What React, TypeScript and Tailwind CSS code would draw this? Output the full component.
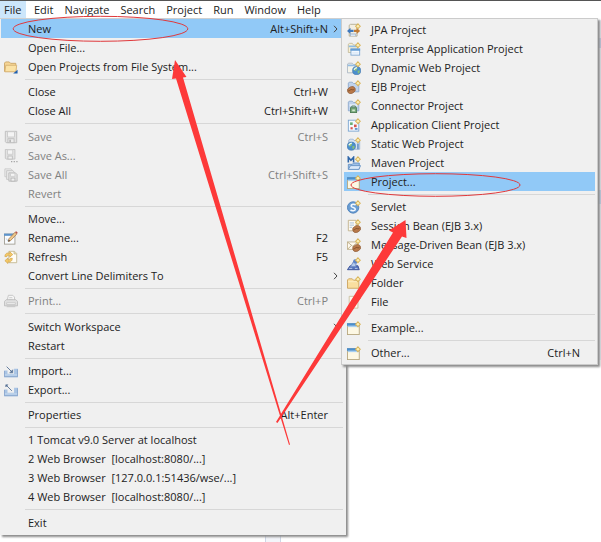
import type { ReactNode } from 'react'

type Entry = {
  label?: string
  keys?: string
  icon?: ReactNode
  disabled?: boolean
  active?: boolean
  arrow?: boolean
  sep?: 'narrow' | 'wide'
}

const Icon = ({ children }: { children: ReactNode }) => (
  <svg viewBox="0 0 16 16" className="size-3.5" aria-hidden="true">
    {children}
  </svg>
)

// small gold star used on every "new something" icon
const Spark = () => (
  <g>
    <path d="M12.500 0L14.200 2L16 3.700L14.200 5.400L12.500 7.400L10.800 5.400L9 3.700L10.800 2Z" fill="#d9b45a" />
    <circle cx="12.500" cy="3.700" r="1.500" fill="#fbeeb4" />
  </g>
)

const Bean = () => (
  <g>
    <ellipse cx="5" cy="11.500" rx="4.600" ry="3.700" transform="rotate(-25 5 11.500)" fill="#b9794a" stroke="#94603a" strokeWidth=".8" />
    <path d="M1.500 12.500c2-.2 2.500-2.200 4-1.600s2 .4 3-.8" fill="none" stroke="#7d4c28" />
  </g>
)

const Globe = ({ x, y }: { x: number; y: number }) => (
  <g transform={`translate(${x} ${y})`}>
    <circle cx="5" cy="5" r="4.700" fill="#4b8fce" stroke="#3a6ea5" strokeWidth=".6" />
    <path d="M1.500 3L4 1L6 2L5 4.500L3 5.500ZM6 5L8.500 4.500L8.500 7L6.500 8.500Z" fill="#8cc277" />
    <path d="M2 4Q3 1.800 5.500 1.500" stroke="#f0f8ff" strokeWidth="1.300" fill="none" />
  </g>
)

const FolderBack = () => (
  <path d="M1.500 13.500V3.500L2.500 2.500H6L7.500 4H13.500V13.500Z" fill="#c0d3ec" stroke="#8da9cd" />
)

const WindowIcon = () => (
  <Icon>
    <rect x=".5" y="3" width="13.500" height="12.500" fill="#fdf8e4" stroke="#b5a57c" />
    <rect x="0" y="2.500" width="14.500" height="3" fill="#4a8fce" />
    <rect x="1" y="5.500" width="12.500" height="1.500" fill="#a9d0f2" />
    <Spark />
  </Icon>
)

const OpenProjectsIcon = () => (
  <Icon>
    <path d="M.6 13V3.500L1.800 2.200H6L7.500 3.800H13.500V13Z" fill="#f6d595" stroke="#c9a364" />
    <path d="M1 13.500L2 6H14.500L13.500 13.500Z" fill="#fbe2a5" stroke="#d6b071" />
    <path d="M15.500 11V15.500H10.500Z" fill="#1f5fae" />
  </Icon>
)

const SaveIcon = () => (
  <Icon>
    <path d="M1.500 1.500H14.500V14.500H2.500L1.500 13.500Z" fill="#e3e3e3" stroke="#bdbdbd" />
    <rect x="4" y="2" width="8" height="6" fill="#f4f4f4" stroke="#cacaca" />
    <rect x="4.500" y="10" width="7" height="4.500" fill="#ececec" stroke="#bcbcbc" />
    <rect x="6" y="11" width="2" height="3" fill="#b9b9b9" />
  </Icon>
)

const SaveAsIcon = () => (
  <Icon>
    <path d="M1.500 .5H12.500V11.500H2.500L1.500 10.500Z" fill="#e3e3e3" stroke="#c2c2c2" />
    <rect x="4" y="1" width="6" height="5" fill="#f4f4f4" stroke="#cdcdcd" />
    <rect x="4.500" y="8" width="5" height="3.500" fill="#efefef" stroke="#bcbcbc" />
    <path d="M8 14.500h1.500M11 14.500h1.500M14 14.500h1.500" stroke="#a5a5a5" strokeWidth="1.500" />
  </Icon>
)

const SaveAllIcon = () => (
  <Icon>
    <path d="M1 1H8L10 3V10H1Z" fill="#ececec" stroke="#c8c8c8" />
    <path d="M3 3H10L12 5V13H3Z" fill="#eaeaea" stroke="#c5c5c5" />
    <path d="M5.500 5.500H13L15 7.500V15H5.500Z" fill="#e2e2e2" stroke="#bababa" />
    <rect x="7.500" y="6" width="5" height="3.500" fill="#f5f5f5" stroke="#cdcdcd" />
    <rect x="8" y="11.500" width="4.500" height="3.500" fill="#f0f0f0" stroke="#b5b5b5" />
  </Icon>
)

const RenameIcon = () => (
  <Icon>
    <rect x=".5" y="3.500" width="12" height="11.500" fill="#fafcff" stroke="#a09d92" />
    <rect x="0" y="3" width="13" height="2.500" fill="#5c93cb" />
    <path d="M2.500 8.500L4.500 11.500L9 9" fill="none" stroke="#b5cce4" />
    <path d="M12.500 1.500L14.500 3.500L7.500 11L5 12L5.500 9Z" fill="#f1c98a" stroke="#a67c50" strokeWidth=".9" />
    <path d="M12.500 1L14 .3L15.700 2L14.700 3.500Z" fill="#b8554a" />
    <path d="M5 12L5.500 10L7 11.500Z" fill="#333" />
  </Icon>
)

const RefreshIcon = () => (
  <Icon>
    <path d="M5.500 1.500H12L14.500 4V14.500H5.500Z" fill="#fffdf5" stroke="#c4b88f" />
    <path d="M11.500 1.500V4.500H14.500" fill="#ece0b8" stroke="#c4b88f" />
    <path d="M1 7.500C1 4 4 2.500 6.500 4V2L10 5.200L6.500 8.200V6.300C5 5.500 3.500 6 3.300 7.500Z" fill="#f5ca68" stroke="#cc9c42" strokeWidth=".7" />
    <path d="M9.500 9.500C9.500 13 6.500 14.500 4.500 13.500V15.500L1 12.200L4.500 9.200V11.200C5.800 11.800 7 11 7.200 9.500Z" fill="#f5ca68" stroke="#cc9c42" strokeWidth=".7" />
  </Icon>
)

const PrintIcon = () => (
  <Icon>
    <path d="M3.500 7.500L5 1.500H10L12 3.500V7.500Z" fill="#f6f6f6" stroke="#c2c2c2" />
    <path d="M6 4H9.500M5.500 6H10" stroke="#d0d0d0" />
    <path d="M.5 8.500L2.500 6.500H13.500L15.500 8.500V13.500H.5Z" fill="#e0e0e0" stroke="#bcbcbc" />
    <path d="M3 10H13V12H3Z" fill="#f2f2f2" stroke="#c8c8c8" />
    <path d="M3 14.500H13" stroke="#c4c4c4" />
  </Icon>
)

const TrayIcon = ({ out }: { out?: boolean }) => (
  <Icon>
    <path d="M0 7.500H4V11H11.500V5.500H16V15H0Z" fill="#a9c4e4" />
    <path d="M.5 8V14.500H15.500V6" fill="none" stroke="#88a5cb" />
    <path d="M1 12.500H15" stroke="#cfdff1" />
    {out ? (
      <g stroke="#536f93" fill="#536f93">
        <path d="M3 3L9 9" />
        <path d="M2 4.500V2H4.500Z" strokeWidth=".6" />
      </g>
    ) : (
      <g stroke="#536f93" fill="#536f93">
        <path d="M3 3L9 9" />
        <path d="M10 6.500V10H6.500Z" strokeWidth=".6" />
      </g>
    )}
  </Icon>
)

const JpaIcon = () => (
  <Icon>
    <path d="M2.500 15V2.500L4 1.500H11.500V15Z" fill="#f3efe2" stroke="#b3ab90" />
    <path d="M4 15V12.500H10V15" fill="#dbe7f5" stroke="#9fb3cc" />
    <path d="M0 9L4 5.500V7.800H7.500V10.200H4V12.500Z" fill="#3f78bd" />
    <path d="M15 9L11 5.500V7.800H8V10.200H11V12.500Z" fill="#c07a36" />
    <Spark />
  </Icon>
)

const EnterpriseIcon = () => (
  <Icon>
    <path d="M1.500 12V2.500L3 1.500H6L7.500 3.500H12V12Z" fill="#f9f0d4" stroke="#c4bb9b" />
    <rect x="2" y="4" width="10" height="2" fill="#8dbbe4" />
    <rect x="4.500" y="8" width="10" height="7" fill="#f2f8ff" stroke="#7ba5d2" />
    <rect x="4" y="7.500" width="11" height="2.500" fill="#629cd6" />
    <path d="M6 12.500H13" stroke="#cfe1f2" />
    <Spark />
  </Icon>
)

const DynamicWebIcon = () => (
  <Icon>
    <path d="M.5 13.500V3.500L2 2.500H6L7.500 4H13V13.500Z" fill="#f5f4ea" stroke="#a9b6c4" />
    <rect x="1" y="4" width="11" height="2" fill="#93bce4" />
    <Globe x={6} y={6} />
    <Spark />
  </Icon>
)

const EjbIcon = () => (
  <Icon>
    <FolderBack />
    <Bean />
    <Spark />
  </Icon>
)

const ConnectorIcon = () => (
  <Icon>
    <FolderBack />
    <path d="M3 6H12V8H3Z" fill="#e5edf8" />
    <rect x="4" y="10" width="7" height="5.500" fill="#78a97a" stroke="#4c7c51" />
    <path d="M5.500 9.500V8H9.500V9.500" stroke="#4c7c51" fill="none" />
    <rect x="6" y="12" width="3" height="2" fill="#d5ecd2" />
    <Spark />
  </Icon>
)

const AppClientIcon = () => (
  <Icon>
    <rect x="1.500" y="2.500" width="12" height="12.500" fill="#f4f9ff" stroke="#78a3d0" />
    <path d="M3.500 5H6.500V8H3.500Z" fill="#6aae75" />
    <path d="M8 7.500H11V10.500H8Z" fill="#d8564c" />
    <path d="M4 10.500H6.500V13H4Z" fill="#d8564c" />
    <path d="M9 11.500H12V13.500H9Z" fill="#5b8cc8" />
    <Spark />
  </Icon>
)

const StaticWebIcon = () => (
  <Icon>
    <path d="M2 12V3.500L3.500 2.500H7L8 4H14.500V14H9" fill="#d6e4f4" stroke="#9ab3d3" />
    <path d="M12.500 7.500V14" stroke="#6f98c9" strokeWidth="2" />
    <Globe x={0} y={5.5} />
    <Spark />
  </Icon>
)

const MavenIcon = () => (
  <Icon>
    <path d="M1.500 7.500V1.500L4.500 5L7.500 1.500V7.500" fill="none" stroke="#2f66a8" strokeWidth="1.800" />
    <path d="M1.500 15V9.500H6L7.500 8H14V15Z" fill="#9fc1e8" stroke="#6391c4" />
    <path d="M1.500 15.300L4 11H15.500L13.500 15.300Z" fill="#dbe9f9" stroke="#6391c4" />
    <Spark />
  </Icon>
)

const ServletIcon = () => (
  <Icon>
    <circle cx="7" cy="8.500" r="6.500" fill="#6a9dd2" stroke="#4a7fba" />
    <path d="M9.800 5.800C8.500 4.500 4.600 4.600 4.700 6.800S9.600 8.300 9.500 10.500S5.500 12.700 4 11.300" fill="none" stroke="#f3f9ff" strokeWidth="1.800" />
    <Spark />
  </Icon>
)

const SessionBeanIcon = () => (
  <Icon>
    <path d="M1.500 1.500H10.500V13.500H1.500Z" fill="#fffaf0" stroke="#bfb08a" />
    <path d="M3 4.500H8M3 7H8M3 9.500H6" stroke="#9dbadb" />
    <g transform="translate(6 0)">
      <Bean />
    </g>
    <Spark />
  </Icon>
)

const MessageBeanIcon = () => (
  <Icon>
    <path d="M.5 4.500H12.500V13H.5Z" fill="#fffaf0" stroke="#bfb08a" />
    <path d="M.5 4.500L6.500 9.500L12.500 4.500M.5 13L5 8.500" fill="none" stroke="#b5a67f" />
    <g transform="translate(6 0)">
      <Bean />
    </g>
    <Spark />
  </Icon>
)

const WebServiceIcon = () => (
  <Icon>
    <path d="M.5 14.500L3.500 10H12.500L14 14.500Z" fill="#5474bc" stroke="#3a5197" />
    <path d="M4 11L8.500 3.500L10.500 5L10 11Z" fill="#b5ccec" stroke="#6b88c0" />
    <circle cx="9.500" cy="5" r="2.500" fill="#5f86c8" />
    <path d="M2.500 13H6M9 13H12" stroke="#c6d7f1" />
    <Spark />
  </Icon>
)

const FolderIcon = () => (
  <Icon>
    <path d="M.6 14V4.500L1.800 3.200H6L7.500 4.800H13.500V14Z" fill="#fadf9f" stroke="#caa15a" />
    <path d="M1.200 6.500H13" stroke="#fdf0c8" />
    <Spark />
  </Icon>
)

const FileIcon = () => (
  <Icon>
    <path d="M2.500 1.500H12.500V15H2.500Z" fill="#fdfbf2" stroke="#c8be9c" />
    <path d="M5 6H10M5 8.500H10M5 11H10" stroke="#e4e2d8" />
    <Spark />
  </Icon>
)

const menuBar = ['Edit', 'Navigate', 'Search', 'Project', 'Run', 'Window', 'Help']

const fileMenu: Entry[] = [
  { label: 'New', keys: 'Alt+Shift+N', arrow: true, active: true },
  { label: 'Open File...' },
  { label: 'Open Projects from File System...', icon: <OpenProjectsIcon /> },
  { sep: 'narrow' },
  { label: 'Close', keys: 'Ctrl+W' },
  { label: 'Close All', keys: 'Ctrl+Shift+W' },
  { sep: 'wide' },
  { label: 'Save', keys: 'Ctrl+S', icon: <SaveIcon />, disabled: true },
  { label: 'Save As...', icon: <SaveAsIcon />, disabled: true },
  { label: 'Save All', keys: 'Ctrl+Shift+S', icon: <SaveAllIcon />, disabled: true },
  { label: 'Revert', disabled: true },
  { sep: 'narrow' },
  { label: 'Move...' },
  { label: 'Rename...', keys: 'F2', icon: <RenameIcon /> },
  { label: 'Refresh', keys: 'F5', icon: <RefreshIcon /> },
  { label: 'Convert Line Delimiters To', arrow: true },
  { sep: 'narrow' },
  { label: 'Print...', keys: 'Ctrl+P', icon: <PrintIcon />, disabled: true },
  { sep: 'wide' },
  { label: 'Switch Workspace', arrow: true },
  { label: 'Restart' },
  { sep: 'narrow' },
  { label: 'Import...', icon: <TrayIcon /> },
  { label: 'Export...', icon: <TrayIcon out /> },
  { sep: 'narrow' },
  { label: 'Properties', keys: 'Alt+Enter' },
  { sep: 'narrow' },
  { label: '1 Tomcat v9.0 Server at localhost' },
  { label: '2 Web Browser  [localhost:8080/...]' },
  { label: '3 Web Browser  [127.0.0.1:51436/wse/...]' },
  { label: '4 Web Browser  [localhost:8080/...]' },
  { sep: 'wide' },
  { label: 'Exit' },
]

const newMenu: Entry[] = [
  { label: 'JPA Project', icon: <JpaIcon /> },
  { label: 'Enterprise Application Project', icon: <EnterpriseIcon /> },
  { label: 'Dynamic Web Project', icon: <DynamicWebIcon /> },
  { label: 'EJB Project', icon: <EjbIcon /> },
  { label: 'Connector Project', icon: <ConnectorIcon /> },
  { label: 'Application Client Project', icon: <AppClientIcon /> },
  { label: 'Static Web Project', icon: <StaticWebIcon /> },
  { label: 'Maven Project', icon: <MavenIcon /> },
  { label: 'Project...', icon: <WindowIcon />, active: true },
  { sep: 'narrow' },
  { label: 'Servlet', icon: <ServletIcon /> },
  { label: 'Session Bean (EJB 3.x)', icon: <SessionBeanIcon /> },
  { label: 'Message-Driven Bean (EJB 3.x)', icon: <MessageBeanIcon /> },
  { label: 'Web Service', icon: <WebServiceIcon /> },
  { label: 'Folder', icon: <FolderIcon /> },
  { label: 'File', icon: <FileIcon /> },
  { sep: 'wide' },
  { label: 'Example...', icon: <WindowIcon /> },
  { sep: 'narrow' },
  { label: 'Other...', keys: 'Ctrl+N', icon: <WindowIcon /> },
]

function Menu({ entries, name }: { entries: Entry[]; name: string }) {
  return (
    <div role="menu" aria-label={name} className="flex flex-col">
      {entries.map((e, i) =>
        e.sep ? (
          <div key={i} role="separator" className={`flex items-center pl-6 ${e.sep === 'wide' ? 'h-[7px]' : 'h-[6px]'}`}>
            <div className="h-px grow bg-[#d7d7d7]" />
          </div>
        ) : (
          <button
            key={i}
            type="button"
            role="menuitem"
            disabled={e.disabled}
            className={`flex h-[19px] items-center whitespace-pre text-left ${e.active ? 'bg-[#91c9f7]' : ''} ${e.disabled ? 'text-[#808080]' : 'text-[#222]'}`}
          >
            <span className="flex w-[27px] shrink-0 pl-[3px]">{e.icon}</span>
            <span className="grow">{e.label}</span>
            <span>{e.keys}</span>
            <span className="flex w-[15px] shrink-0 justify-center">
              {e.arrow && (
                <svg viewBox="0 0 5 8" className="h-2 w-[5px]" aria-hidden="true">
                  <path d="M1 .8L4 4L1 7.200" fill="none" stroke="#444" />
                </svg>
              )}
            </span>
          </button>
        ),
      )}
    </div>
  )
}

export default function App() {
  return (
    <div className="relative min-h-screen overflow-hidden bg-white font-['Open_Sans',sans-serif] text-[11px] leading-4">
      {/* slivers of the window behind the menus */}
      <div className="absolute top-5 right-0 h-[340px] w-1 bg-[#eef0f6]" />
      <div className="absolute top-[38px] right-0 h-[10px] w-1 bg-[#c5cfe6]" />
      <div className="absolute top-[190px] right-0 h-[14px] w-1 bg-[#c5d6ee]" />
      <div className="absolute bottom-0 left-[265px] h-2 w-4 border-x border-[#cdd6e6] bg-[#f3f5fa]" />

      <nav className="relative flex h-[18px] border-t border-[#555] bg-white text-[#222]">
        <button type="button" className="w-[26px] bg-[#cce6fb] pl-1 text-left">
          File
        </button>
        <div className="flex gap-[11px] pl-2">
          {menuBar.map((m) => (
            <button key={m} type="button">
              {m}
            </button>
          ))}
        </div>
      </nav>

      <main className="relative pr-[255px]">
        <div className="border-t border-[#cfcfcf] bg-[#f0f0f0] pr-[3px] pb-[3px] pl-px shadow-[2px_2px_2px_#8c8c8c]">
          <Menu entries={fileMenu} name="File" />
        </div>
        <div className="absolute top-0 right-[3px] w-[257px] border border-[#cbcbcb] bg-[#f0f0f0] pt-px pr-[2px] pb-[2px] pl-[2px] shadow-[2px_2px_2px_#8c8c8c]">
          <Menu entries={newMenu} name="New" />
        </div>
      </main>

      {/* red annotations */}
      <svg className="pointer-events-none absolute top-0 left-0 h-full w-full" aria-hidden="true">
        <g fill="none" stroke="#e0393c">
          <ellipse cx="100.500" cy="28.800" rx="87.300" ry="12.500" />
          <ellipse cx="435.500" cy="185" rx="84.500" ry="11.300" />
        </g>
        <g fill="#fd3939">
          <path d="M175 60L186.500 77L183 77.500L290 444.500L289 445L176 78.500L172 79Z" />
          <path d="M405.500 220L406.500 238L402 236.500L277.500 423L276 422L393 232.500L389 230.500Z" />
        </g>
      </svg>
    </div>
  )
}
